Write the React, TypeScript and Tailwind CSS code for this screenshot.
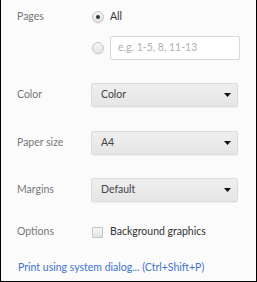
const font = { fontFamily: 'Lato, "Noto Sans", sans-serif' }

function Radio({ checked }: { checked?: boolean }) {
  return (
    <span className="flex h-[12px] w-[12px] items-center justify-center rounded-full border border-[#c4c4c4] bg-gradient-to-b from-[#f6f6f6] to-[#e4e4e4] shadow-[0_1px_1px_rgba(0,0,0,0.06)]">
      {checked && <span className="h-[4px] w-[4px] rounded-full bg-[#333]" />}
    </span>
  )
}

function Select({ value }: { value: string }) {
  return (
    <div className="flex h-[24px] w-[147px] items-center justify-between rounded-[2px] border border-[#dcdcdc] bg-gradient-to-b from-[#efefef] to-[#e5e5e5] pl-[9px] pr-[6px] text-[10.5px] text-[#444] shadow-[0_1px_1px_rgba(0,0,0,0.05)]">
      <span>{value}</span>
      <svg width="7" height="4" viewBox="0 0 7 4">
        <path d="M0 0h7L3.5 4z" fill="#111" />
      </svg>
    </div>
  )
}

function Row({ label, children, className }: { label: string; children: React.ReactNode; className?: string }) {
  return (
    <div className={`flex items-center ${className ?? ''}`}>
      <div className="w-[74px] text-[10.5px] text-[#777]">{label}</div>
      {children}
    </div>
  )
}

export default function App() {
  return (
    <div
      style={font}
      className="h-[282px] w-[257px] overflow-hidden border-x border-b border-black bg-[#fbfbfb] pl-[16px]"
    >
      <Row label="Pages" className="mt-[5px] h-[24px]">
        <div className="flex items-center gap-[6px] pl-[1px]">
          <Radio checked />
          <span className="text-[10.5px] text-[#333]">All</span>
        </div>
      </Row>
      <div className="mt-[7px] flex h-[24px] items-center pl-[75px]">
        <Radio />
        <div className="ml-[6px] flex h-[24px] w-[130px] items-center rounded-[2px] border border-[#d9d9d9] bg-white pl-[7px] text-[10.5px] text-[#b0b0b0]">
          e.g. 1-5, 8, 11-13
        </div>
      </div>

      <Row label="Color" className="mt-[23px] h-[24px]">
        <Select value="Color" />
      </Row>
      <Row label="Paper size" className="mt-[24px] h-[24px]">
        <Select value="A4" />
      </Row>
      <Row label="Margins" className="mt-[23px] h-[24px]">
        <Select value="Default" />
      </Row>

      <Row label="Options" className="mt-[18px] h-[24px]">
        <div className="flex items-center gap-[7px] pl-[1px]">
          <span className="h-[11px] w-[11px] rounded-[1px] border border-[#c4c4c4] bg-gradient-to-b from-[#f6f6f6] to-[#e4e4e4]" />
          <span className="text-[10.5px] text-[#333]">Background graphics</span>
        </div>
      </Row>

      <div className="mt-[12px] flex h-[24px] items-center pl-[1px] text-[10.5px] text-[#3f73cf]">
        Print using system dialog... (Ctrl+Shift+P)
      </div>
    </div>
  )
}
